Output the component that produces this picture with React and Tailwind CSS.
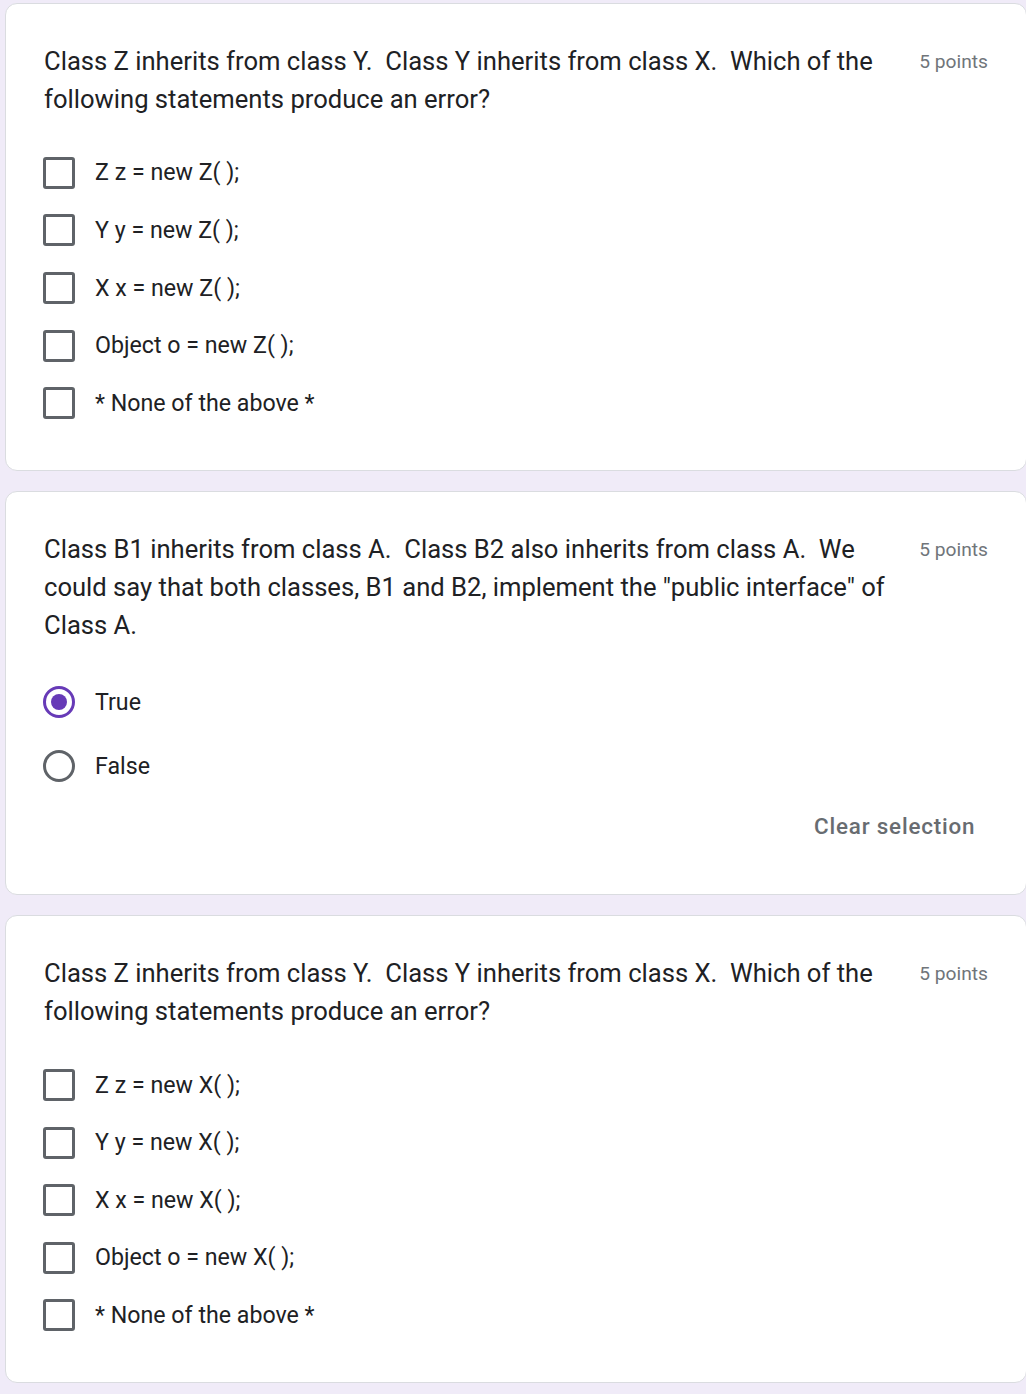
import { useState } from 'react';

const font = { fontFamily: 'Roboto, "Liberation Sans", Arial, sans-serif' };

function Checkbox() {
  return <span className="block -ml-[1px] w-[32px] h-[32px] shrink-0 rounded-[3px] border-[3.2px] border-[#5f6368] bg-white" />;
}

function Radio({ checked }) {
  return (
    <span
      className={
        'flex items-center justify-center -ml-[1px] w-[32px] h-[32px] shrink-0 rounded-full border-[3.2px] ' +
        (checked ? 'border-[#673ab7]' : 'border-[#5f6368]')
      }
    >
      {checked && <span className="block w-[16px] h-[16px] rounded-full bg-[#673ab7]" />}
    </span>
  );
}

function Card({ title, children }) {
  return (
    <div className="w-[1022px] bg-white border border-[#dadce0] rounded-[12px] px-[38px] pt-[37.6px] pb-[37.6px]">
      <div className="flex items-start">
        <div className="flex-1 min-w-0 text-[25.6px] leading-[38.4px] text-[#202124] whitespace-pre-wrap">{title}</div>
        <div className="ml-[32px] pt-[5px] text-[19.2px] leading-[30px] text-[#70757a] whitespace-nowrap">5 points</div>
      </div>
      <div className="mt-[25.6px]">{children}</div>
    </div>
  );
}

function CheckList({ items }) {
  return items.map((t) => (
    <div key={t} className="flex items-center h-[57.6px]">
      <Checkbox />
      <span className="ml-[20px] text-[23.2px] text-[#202124] whitespace-pre">{t}</span>
    </div>
  ));
}

export default function App() {
  const [answer, setAnswer] = useState('True');
  const q1 = 'Class Z inherits from class Y.  Class Y inherits from class X.  Which of the following statements produce an error?';

  return (
    <div className="min-h-screen bg-[#f0ebf8] pl-[5px] pt-[3px] pb-[10px] overflow-hidden" style={font}>
      <div className="flex flex-col gap-[20.5px]">
        <Card title={q1}>
          <CheckList items={['Z z = new Z( );', 'Y y = new Z( );', 'X x = new Z( );', 'Object o = new Z( );', '* None of the above *']} />
        </Card>

        <Card title={'Class B1 inherits from class A.  Class B2 also inherits from class A.  We could say that both classes, B1 and B2, implement the "public interface" of Class A.'}>
          {['True', 'False'].map((v) => (
            <div key={v} className="flex items-center h-[64px] cursor-pointer" onClick={() => setAnswer(v)}>
              <Radio checked={answer === v} />
              <span className="ml-[20px] text-[23.2px] text-[#202124]">{v}</span>
            </div>
          ))}
          <div className="flex justify-end items-center h-[57.6px]">
            <button
              className="px-[12.8px] text-[22.4px] font-medium tracking-[0.8px] text-[#686c71]"
              onClick={() => setAnswer(null)}
            >
              Clear selection
            </button>
          </div>
        </Card>

        <Card title={q1}>
          <CheckList items={['Z z = new X( );', 'Y y = new X( );', 'X x = new X( );', 'Object o = new X( );', '* None of the above *']} />
        </Card>
      </div>
    </div>
  );
}
